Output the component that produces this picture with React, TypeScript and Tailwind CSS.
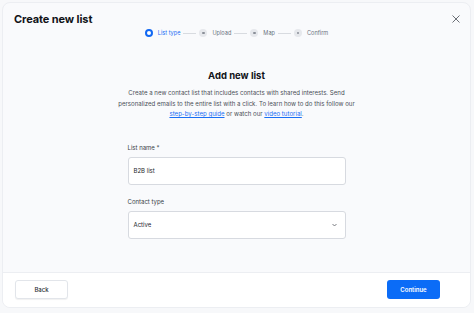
import React from "react";

function Step({ label, active }: { label: string; active?: boolean }) {
  return (
    <div className="flex items-center gap-[5px]">
      {active ? (
        <div className="w-[8px] h-[8px] rounded-full border-[2px] border-[#1268f3] bg-white" />
      ) : (
        <div className="w-[8px] h-[8px] rounded-full bg-[#e6e8ec] flex items-center justify-center">
          <div className="w-[2.5px] h-[2.5px] rounded-full bg-[#8a8f98]" />
        </div>
      )}
      <span className={active ? "text-[#1a6ff5]" : "text-[#6b7280]"}>{label}</span>
    </div>
  );
}

function Line() {
  return <div className="w-[13px] h-px bg-[#d8dbe0] mx-[3px]" />;
}

export default function App() {
  return (
    <div
      className="w-[474px] h-[313px] bg-[#f7f8fa] pt-[2px] px-[2px] overflow-hidden"
      style={{ fontFamily: "Inter, 'Noto Sans', sans-serif" }}
    >
      <div className="w-[469px] h-[306px] rounded-[8px] border border-[#eceef2] bg-[#f9fafc] flex flex-col overflow-hidden">
        <div className="flex items-center justify-between pl-[11px] pr-[8px] pt-[8px]">
          <h1 className="text-[11px] leading-[16px] font-bold text-[#111318] tracking-[-0.1px]">Create new list</h1>
          <svg width="8" height="8" viewBox="0 0 8 8" className="mr-[2px]">
            <path d="M0.5 0.5L7.5 7.5M7.5 0.5L0.5 7.5" stroke="#6b6f76" strokeWidth="1" />
          </svg>
        </div>
        <div className="mt-[1px] h-[10px] flex items-center justify-center text-[5.6px] leading-[10px]">
          <Step label="List type" active />
          <Line />
          <Step label="Upload" />
          <Line />
          <Step label="Map" />
          <Line />
          <Step label="Confirm" />
        </div>
        <div className="flex-1 flex flex-col items-center">
          <h2 className="mt-[31px] text-[9.5px] leading-[14px] font-bold text-[#111318]">Add new list</h2>
          <p className="mt-[5px] w-[242px] text-center text-[6.1px] leading-[10.5px] text-[#4b5058]">
            Create a new contact list that includes contacts with shared interests. Send personalized emails to the entire list with a click. To learn how to do this follow our{" "}
            <span className="text-[#1a6ff5] underline">step-by-step guide</span> or watch our{" "}
            <span className="text-[#1a6ff5] underline">video tutorial</span>.
          </p>
          <div className="mt-[23px] w-[218px] flex flex-col">
            <label className="text-[6px] leading-[10px] text-[#3a3f47]">List name *</label>
            <div className="mt-[4px] h-[28px] rounded-[3px] border border-[#d7dae0] bg-white flex items-center pl-[5px] text-[6px] text-[#25282d]">
              B2B list
            </div>
            <label className="mt-[12px] text-[6px] leading-[10px] text-[#3a3f47]">Contact type</label>
            <div className="mt-[4px] h-[28px] rounded-[3px] border border-[#d7dae0] bg-white flex items-center justify-between pl-[5px] pr-[8px] text-[6px] text-[#25282d]">
              <span>Active</span>
              <svg width="5" height="4" viewBox="0 0 5 4">
                <path d="M0.5 1L2.5 3L4.5 1" stroke="#5a5e66" strokeWidth="0.8" fill="none" />
              </svg>
            </div>
          </div>
        </div>
        <div className="h-[35px] border-t border-[#eceef2] bg-white flex items-start justify-between pt-[7px] pl-[12px] pr-[30px]">
          <button className="w-[53px] h-[19px] rounded-[3px] border border-[#e2e5ea] bg-white shadow-[0_1px_1px_rgba(0,0,0,0.06)] text-[6px] font-medium text-[#2b2e33]">
            Back
          </button>
          <button className="w-[53px] h-[19px] rounded-[3px] bg-[#0b6cf7] text-[6px] font-semibold text-white">
            Continue
          </button>
        </div>
      </div>
    </div>
  );
}
